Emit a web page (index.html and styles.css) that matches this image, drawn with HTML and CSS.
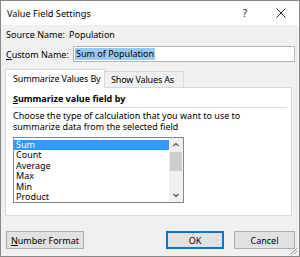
FILE: index.html
```html
<!DOCTYPE html>
<html>
<head>
<meta charset="utf-8">
<link rel="stylesheet" href="styles.css">
</head>
<body>
<div class="dialog">
  <div class="titlebar">
    <span class="title">Value Field Settings</span>
    <span class="tb-btn help">?</span>
    <span class="tb-btn close"><svg width="10" height="10" viewBox="0 0 10 10"><path d="M0.5 0.5 L9.5 9.5 M9.5 0.5 L0.5 9.5" stroke="#222" stroke-width="1" fill="none"/></svg></span>
  </div>
  <div class="content">
    <div class="row src">
      <span class="label">Source Name:</span>
      <span class="value">Population</span>
    </div>
    <div class="row cust">
      <span class="label"><u>C</u>ustom Name:</span>
      <div class="input"><span class="sel">Sum of Population</span></div>
    </div>
    <div class="tabs">
      <div class="tab active">Summarize Values By</div>
      <div class="tab other">Show Values As</div>
    </div>
    <div class="panel">
      <div class="section-title"><u>S</u>ummarize value field by</div>
      <div class="sep"></div>
      <div class="desc">Choose the type of calculation that you want to use to summarize data from the selected field</div>
      <div class="listbox">
        <div class="items">
          <div class="item selected">Sum</div>
          <div class="item">Count</div>
          <div class="item">Average</div>
          <div class="item">Max</div>
          <div class="item">Min</div>
          <div class="item">Product</div>
        </div>
        <div class="scrollbar">
          <svg class="arrow" width="14" height="14" viewBox="0 0 14 14"><path d="M4.5 8 L7 5.5 L9.5 8" stroke="#555" stroke-width="1.2" fill="none"/></svg>
          <div class="track"><div class="thumb"></div></div>
          <svg class="arrow" width="14" height="14" viewBox="0 0 14 14"><path d="M4.5 6 L7 8.5 L9.5 6" stroke="#555" stroke-width="1.2" fill="none"/></svg>
        </div>
      </div>
    </div>
    <div class="buttons">
      <div class="btn numfmt"><u>N</u>umber Format</div>
      <div class="spacer"></div>
      <div class="btn ok">OK</div>
      <div class="btn cancel">Cancel</div>
    </div>
  </div>
  <svg class="grip" width="8" height="8" viewBox="0 0 8 8"><path d="M7 1 L1 7 M7 4 L4 7" stroke="#999" stroke-width="1" fill="none"/></svg>
</div>
</body>
</html>
```
FILE: styles.css
```css
html, body {
  margin: 0;
  padding: 0;
  width: 300px;
  height: 257px;
  overflow: hidden;
  background: #f0f0f0;
}
.dialog {
  position: relative;
  box-sizing: border-box;
  width: 300px;
  height: 257px;
  border: 1px solid #888;
  background: #f0f0f0;
  font-family: "Noto Sans", "Open Sans", sans-serif;
  font-size: 9px;
  color: #000;
  display: flex;
  flex-direction: column;
  white-space: nowrap;
}
.titlebar {
  height: 24px;
  background: #fff;
  display: flex;
  align-items: center;
  flex-shrink: 0;
}
.title {
  margin-left: 6px;
  flex: 1;
  font-size: 9.2px;
}
.tb-btn {
  display: flex;
  align-items: center;
  justify-content: center;
  width: 30px;
  height: 24px;
}
.help {
  font-size: 10px;
  margin-right: 6px;
  color: #222;
}
.close {
  margin-right: 3px;
}
.content {
  flex: 1;
  display: flex;
  flex-direction: column;
  padding: 0 4px;
}
.row {
  display: flex;
  align-items: center;
  height: 20px;
}
.src {
  height: 19px;
}
.label {
  margin-left: 1px;
  width: 63px;
}
.cust .label {
  width: 67px;
}
.input {
  flex: 1;
  height: 14px;
  border: 1px solid #b5b5b5;
  background: #fff;
  display: flex;
  align-items: center;
  padding-left: 1px;
}
.sel {
  background: #99c9ef;
  line-height: 12px;
  padding: 0 1px;
}
.tabs {
  display: flex;
  margin-top: 5px;
  height: 18px;
  align-items: flex-end;
  position: relative;
  z-index: 1;
}
.tab {
  box-sizing: border-box;
  height: 16px;
  border: 1px solid #d9d9d9;
  border-bottom: none;
  padding: 0 6px;
  display: flex;
  align-items: center;
  background: #f0f0f0;
  letter-spacing: -0.15px;
}
.tab.active {
  height: 19px;
  width: 100px;
  background: #fff;
  padding: 0 3px 1px 7px;
  margin-bottom: -1px;
}
.tab.other {
  width: 79px;
  border-left: none;
}
.panel {
  box-sizing: border-box;
  width: 287px;
  height: 129px;
  border: 1px solid #d9d9d9;
  background: #fff;
  padding: 5px 4px 0 7px;
  display: flex;
  flex-direction: column;
}
.section-title {
  font-weight: bold;
  line-height: 12px;
}
.sep {
  height: 1px;
  background: #dcdcdc;
  margin: 2px 0 2px -1px;
}
.desc {
  line-height: 11px;
  white-space: normal;
  padding-right: 4px;
}
.listbox {
  box-sizing: border-box;
  width: 171px;
  height: 66px;
  margin-top: 5px;
  border: 1px solid #828790;
  display: flex;
}
.items {
  flex: 1;
  padding-top: 2px;
}
.item {
  height: 10.4px;
  line-height: 10.4px;
  padding-left: 2px;
}
.item.selected {
  background: #3399ff;
  color: #fff;
}
.scrollbar {
  width: 14px;
  background: #f0f0f0;
  display: flex;
  flex-direction: column;
}
.arrow {
  display: block;
  flex-shrink: 0;
}
.track {
  flex: 1;
}
.thumb {
  height: 19px;
  margin: 0 1px;
  background: #cdcdcd;
}
.buttons {
  display: flex;
  margin-top: 15px;
  height: 18px;
}
.spacer {
  flex: 1;
}
.btn {
  box-sizing: border-box;
  height: 18px;
  border: 1px solid #adadad;
  background: #e1e1e1;
  display: flex;
  align-items: center;
  justify-content: center;
}
.numfmt {
  width: 78px;
  margin-left: 1px;
}
.ok {
  width: 58px;
  border: 1px solid #0078d7;
  box-shadow: inset 0 0 0 1px #0078d7;
}
.cancel {
  width: 61px;
  margin-left: 10px;
}
.grip {
  position: absolute;
  right: 1px;
  bottom: 1px;
}
```
